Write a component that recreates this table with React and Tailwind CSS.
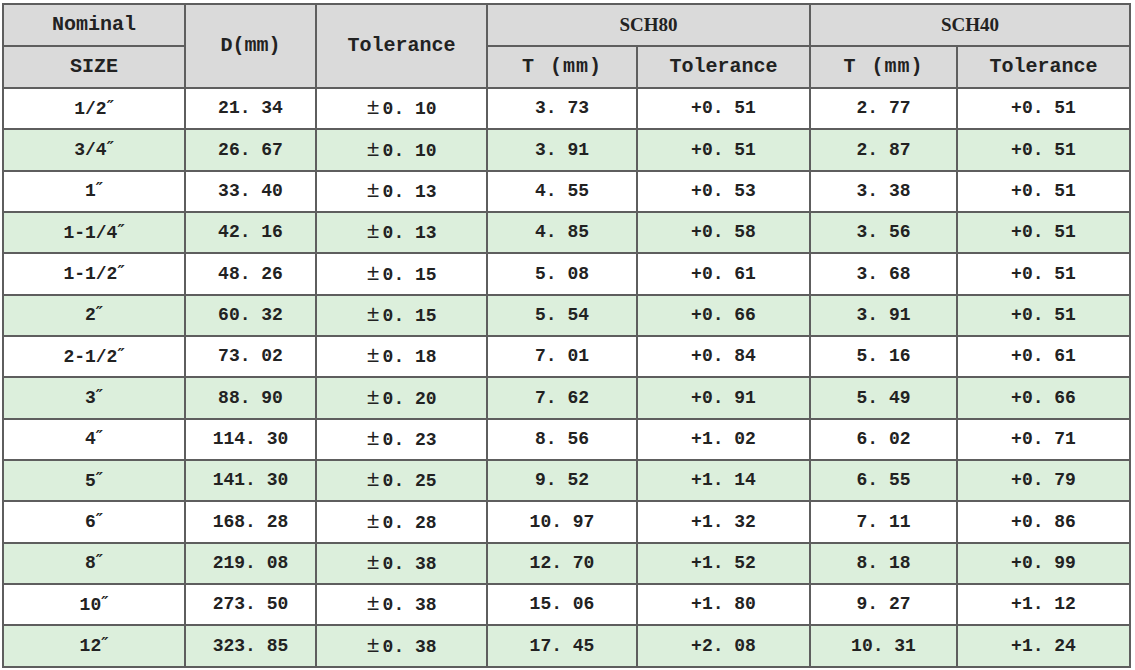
const rows = [
  ["1/2", "21. 34", "0. 10", "3. 73", "+0. 51", "2. 77", "+0. 51"],
  ["3/4", "26. 67", "0. 10", "3. 91", "+0. 51", "2. 87", "+0. 51"],
  ["1", "33. 40", "0. 13", "4. 55", "+0. 53", "3. 38", "+0. 51"],
  ["1-1/4", "42. 16", "0. 13", "4. 85", "+0. 58", "3. 56", "+0. 51"],
  ["1-1/2", "48. 26", "0. 15", "5. 08", "+0. 61", "3. 68", "+0. 51"],
  ["2", "60. 32", "0. 15", "5. 54", "+0. 66", "3. 91", "+0. 51"],
  ["2-1/2", "73. 02", "0. 18", "7. 01", "+0. 84", "5. 16", "+0. 61"],
  ["3", "88. 90", "0. 20", "7. 62", "+0. 91", "5. 49", "+0. 66"],
  ["4", "114. 30", "0. 23", "8. 56", "+1. 02", "6. 02", "+0. 71"],
  ["5", "141. 30", "0. 25", "9. 52", "+1. 14", "6. 55", "+0. 79"],
  ["6", "168. 28", "0. 28", "10. 97", "+1. 32", "7. 11", "+0. 86"],
  ["8", "219. 08", "0. 38", "12. 70", "+1. 52", "8. 18", "+0. 99"],
  ["10", "273. 50", "0. 38", "15. 06", "+1. 80", "9. 27", "+1. 12"],
  ["12", "323. 85", "0. 38", "17. 45", "+2. 08", "10. 31", "+1. 24"],
];

const mono = "font-['Liberation_Mono','DejaVu_Sans_Mono','Noto_Sans_CJK_SC',monospace]";
const cell = "border-2 border-[#5e5e5e] text-center align-middle p-0";
const serif = "font-['Liberation_Serif',serif] text-[19px]";

function TMm() {
  return (
    <>
      T<span className="ml-[16px] tracking-[1px]">(mm)</span>
    </>
  );
}

export default function App() {
  return (
    <div className="bg-white w-[1135px] h-[670px] pl-[2px] pt-[3px]">
      <table className={`border-collapse table-fixed w-[1129px] text-[#222] ${mono}`}>
        <colgroup>
          <col className="w-[182px]" />
          <col className="w-[131px]" />
          <col className="w-[171px]" />
          <col className="w-[150px]" />
          <col className="w-[173px]" />
          <col className="w-[147px]" />
          <col className="w-[173px]" />
        </colgroup>
        <thead className="bg-[#dadada] text-[20px] font-bold">
          <tr className="h-[42px]">
            <td className={cell}>Nominal</td>
            <td className={cell} rowSpan={2}>D(mm)</td>
            <td className={cell} rowSpan={2}>Tolerance</td>
            <td className={`${cell} ${serif}`} colSpan={2}>SCH80</td>
            <td className={`${cell} ${serif}`} colSpan={2}>SCH40</td>
          </tr>
          <tr className="h-[42px]">
            <td className={cell}>SIZE</td>
            <td className={cell}><TMm /></td>
            <td className={cell}>Tolerance</td>
            <td className={cell}><TMm /></td>
            <td className={cell}>Tolerance</td>
          </tr>
        </thead>
        <tbody className="text-[18px] font-bold">
          {rows.map((r, i) => (
            <tr key={r[0]} className={`h-[41.35px] ${i % 2 ? "bg-[#dcefdc]" : "bg-white"}`}>
              <td className={cell}>
                {r[0]}
                <span className="font-['DejaVu_Sans',sans-serif] italic text-[16px] align-[2px]">″</span>
              </td>
              <td className={cell}>{r[1]}</td>
              <td className={cell}>
                <span className="text-[22px] font-normal mr-[3px]">±</span>{r[2]}
              </td>
              <td className={cell}>{r[3]}</td>
              <td className={cell}>{r[4]}</td>
              <td className={cell}>{r[5]}</td>
              <td className={cell}>{r[6]}</td>
            </tr>
          ))}
        </tbody>
      </table>
    </div>
  );
}
